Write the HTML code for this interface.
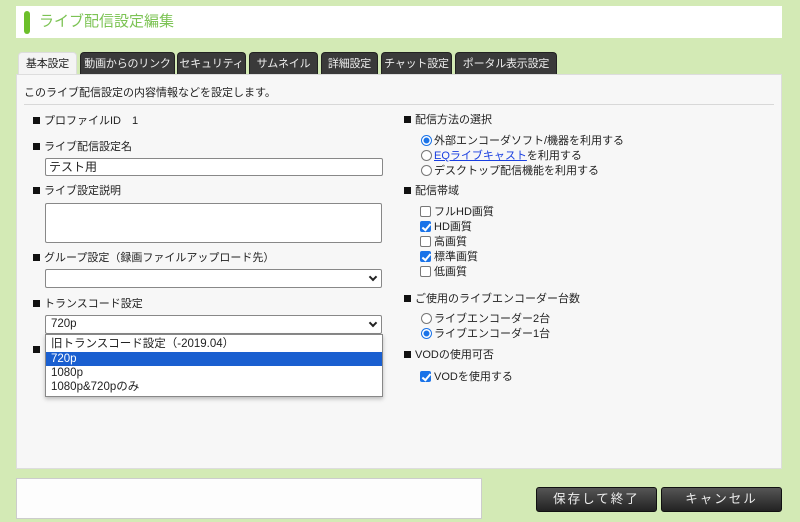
<!DOCTYPE html>
<html><head><meta charset="utf-8">
<style>
*{box-sizing:border-box;margin:0;padding:0}
body{width:800px;height:522px;background:#d3eab5;font-family:"Liberation Sans","Noto Sans CJK JP",sans-serif;font-size:11px;color:#222;position:relative;overflow:hidden}
.a{position:absolute;white-space:nowrap}
.hdr{left:16px;top:6px;width:766px;height:32px;background:#fff}
.bar{left:24px;top:11px;width:6px;height:23px;background:#6cbf2a;border-radius:3px}
.ttl{left:39px;top:11px;font-size:15px;color:#7cc354;line-height:22px}
.tab{top:52px;height:22px;background:#3a3a3a;color:#eee;border-radius:4px 4px 0 0;font-size:11px;line-height:22px;text-align:center;border:1px solid #222;border-bottom:none;letter-spacing:-0.2px}
.tab.on{background:#f4f4f4;color:#222;border-color:#ddd}
.panel{left:16px;top:74px;width:766px;height:395px;background:#f7f7f7;border:1px solid #ddd}
.sep{left:24px;top:104px;width:750px;height:1px;background:#d8d8d8}
.lb{line-height:14px}
.sq{display:inline-block;width:7px;height:7px;background:#111;margin-right:4px;vertical-align:0px}
.inp{background:#fff;border:1px solid #888;border-radius:2px}
.chev{position:absolute;right:5px;top:4px;width:6px;height:6px;border-right:2px solid #222;border-bottom:2px solid #222;transform:rotate(45deg)}
.radio{width:11px;height:11px;border-radius:50%;border:1px solid #777;background:#fff}
.radio.on{border:1px solid #1a73e8;background:radial-gradient(circle,#1a73e8 0 2.7px,#fff 3.2px)}
.cb{width:11px;height:11px;border:1px solid #777;border-radius:2px;background:#fff}
.cb.on{background:#1a73e8;border-color:#1a73e8}
.cb.on::after{content:"";position:absolute;left:3px;top:0px;width:3px;height:7px;border-right:2px solid #fff;border-bottom:2px solid #fff;transform:rotate(40deg)}
.dd{left:45px;top:334px;width:338px;height:63px;background:#fff;border:1px solid #888;box-shadow:0 2px 4px rgba(0,0,0,.25)}
.opt{position:absolute;left:0;width:336px;height:14px;line-height:14px;padding-left:5px;font-size:11.5px}
.btn{top:487px;height:25px;background:linear-gradient(#555,#222);color:#eee;border:1px solid #111;border-radius:3px;font-size:12.5px;line-height:23px;text-align:center;letter-spacing:2px}
</style></head><body>
<div class="a hdr"></div><div class="a bar"></div>
<div class="a ttl">ライブ配信設定編集</div>
<div class="a tab on" style="left:18px;width:59px">基本設定</div>
<div class="a tab" style="left:80px;width:95px">動画からのリンク</div>
<div class="a tab" style="left:177px;width:69px">セキュリティ</div>
<div class="a tab" style="left:249px;width:69px">サムネイル</div>
<div class="a tab" style="left:321px;width:57px">詳細設定</div>
<div class="a tab" style="left:381px;width:71px">チャット設定</div>
<div class="a tab" style="left:455px;width:102px">ポータル表示設定</div>
<div class="a panel"></div>
<div class="a lb" style="left:24px;top:86px">このライブ配信設定の内容情報などを設定します。</div>
<div class="a sep"></div>

<div class="a lb" style="left:33px;top:114px"><span class="sq"></span>プロファイルID　1</div>
<div class="a lb" style="left:33px;top:140px"><span class="sq"></span>ライブ配信設定名</div>
<div class="a inp" style="left:45px;top:158px;width:338px;height:18px;font-size:12px;line-height:16px;padding-left:3px">テスト用</div>
<div class="a lb" style="left:33px;top:184px"><span class="sq"></span>ライブ設定説明</div>
<div class="a inp" style="left:45px;top:203px;width:337px;height:40px"></div>
<div class="a lb" style="left:33px;top:251px"><span class="sq"></span>グループ設定（録画ファイルアップロード先）</div>
<div class="a inp" style="left:45px;top:269px;width:337px;height:19px"><span class="chev"></span></div>
<div class="a lb" style="left:33px;top:297px"><span class="sq"></span>トランスコード設定</div>
<div class="a inp" style="left:45px;top:315px;width:337px;height:19px;font-size:11.5px;line-height:17px;padding-left:5px">720p<span class="chev"></span></div>
<div class="a lb" style="left:33px;top:343px"><span class="sq"></span></div>
<div class="a dd">
<div class="opt" style="top:1px;height:16px;line-height:16px">旧トランスコード設定（-2019.04）</div>
<div class="opt" style="top:17px;background:#1a5fd0;color:#fff">720p</div>
<div class="opt" style="top:31px">1080p</div>
<div class="opt" style="top:45px;height:16px">1080p&amp;720pのみ</div>
</div>

<div class="a lb" style="left:404px;top:113px"><span class="sq"></span>配信方法の選択</div>
<div class="a radio on" style="left:421px;top:135px"></div><div class="a lb" style="left:434px;top:134px">外部エンコーダソフト/機器を利用する</div>
<div class="a radio" style="left:421px;top:150px"></div><div class="a lb" style="left:434px;top:149px"><span style="color:#1a3fe0;text-decoration:underline">EQライブキャスト</span>を利用する</div>
<div class="a radio" style="left:421px;top:165px"></div><div class="a lb" style="left:434px;top:164px">デスクトップ配信機能を利用する</div>
<div class="a lb" style="left:404px;top:184px"><span class="sq"></span>配信帯域</div>
<div class="a cb" style="left:420px;top:206px"></div><div class="a lb" style="left:434px;top:205px">フルHD画質</div>
<div class="a cb on" style="left:420px;top:221px"></div><div class="a lb" style="left:434px;top:220px">HD画質</div>
<div class="a cb" style="left:420px;top:236px"></div><div class="a lb" style="left:434px;top:235px">高画質</div>
<div class="a cb on" style="left:420px;top:251px"></div><div class="a lb" style="left:434px;top:250px">標準画質</div>
<div class="a cb" style="left:420px;top:266px"></div><div class="a lb" style="left:434px;top:265px">低画質</div>
<div class="a lb" style="left:404px;top:292px"><span class="sq"></span>ご使用のライブエンコーダー台数</div>
<div class="a radio" style="left:421px;top:313px"></div><div class="a lb" style="left:434px;top:312px">ライブエンコーダー2台</div>
<div class="a radio on" style="left:421px;top:328px"></div><div class="a lb" style="left:434px;top:327px">ライブエンコーダー1台</div>
<div class="a lb" style="left:404px;top:348px"><span class="sq"></span>VODの使用可否</div>
<div class="a cb on" style="left:420px;top:371px"></div><div class="a lb" style="left:434px;top:370px">VODを使用する</div>

<div class="a" style="left:16px;top:478px;width:466px;height:41px;background:#fdfdfd;border:1px solid #ccc"></div>
<div class="a btn" style="left:536px;width:121px">保存して終了</div>
<div class="a btn" style="left:661px;width:121px">キャンセル</div>
</body></html>
